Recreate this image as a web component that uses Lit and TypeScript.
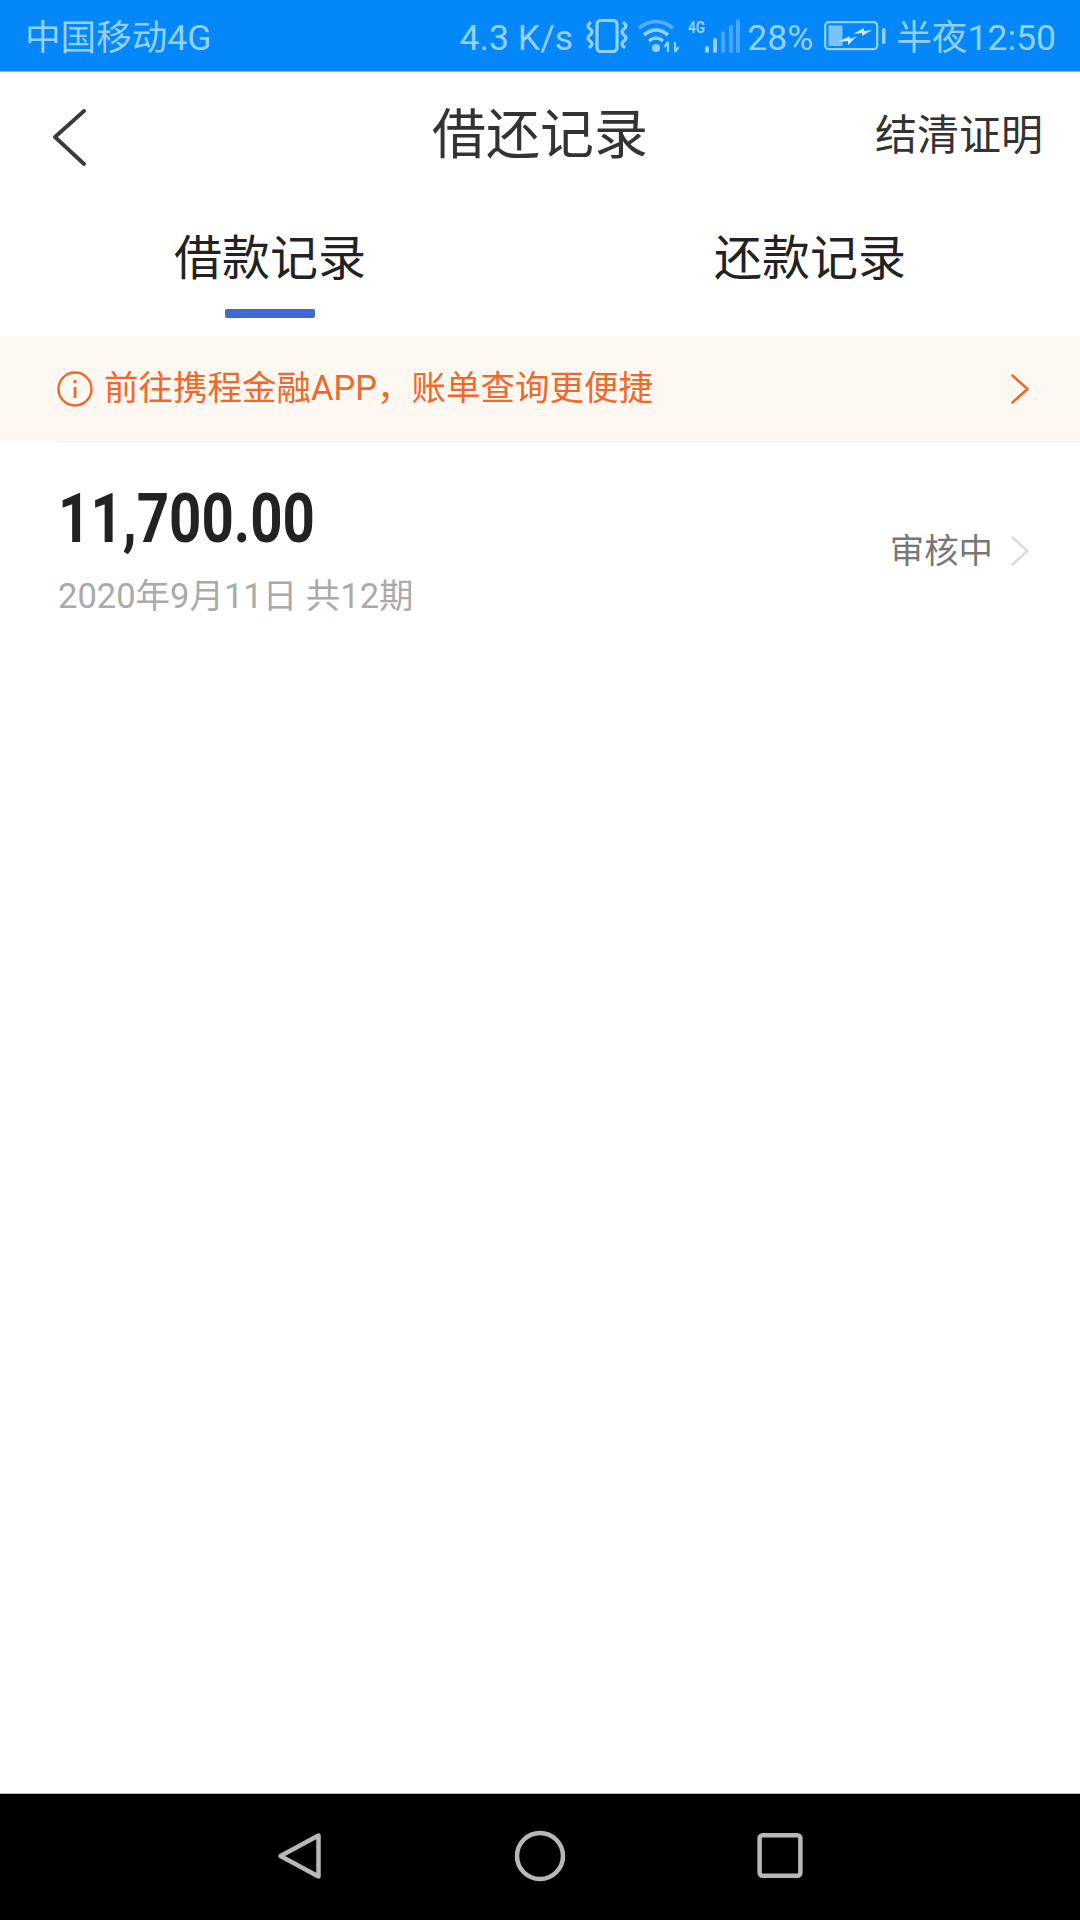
import { LitElement, html, css } from "lit";
import { customElement } from "lit/decorators.js";

const chevron = (cls: string) => html`<svg class=${cls} viewBox="0 0 18 30" fill="none" stroke="currentColor" stroke-width="2.6" stroke-linecap="round" stroke-linejoin="round"><path d="M1.5 1.5 L16.5 15 L1.5 28.5"/></svg>`;

@customElement("app-root")
export class AppRoot extends LitElement {
  static styles = css`
    :host { display: block; width: 1080px; height: 1920px; background: #fff; font-family: Roboto, "Noto Sans CJK SC", sans-serif; overflow: hidden; }
    .page { display: flex; flex-direction: column; height: 1920px; }
    .status { height: 72px; flex: none; box-sizing: border-box; background: #0487f9; border-bottom: 1px solid #6dbcfb; display: flex; align-items: center; justify-content: space-between; padding: 0 24px 0 25px; color: #93d0fe; font-size: 35.6px; line-height: 64px; }
    .status-right { display: flex; align-items: center; }
    .status svg { display: block; flex: none; }
    .t { margin-top: 4px; white-space: nowrap; }
    .speed { margin-right: 13px; }
    .vib { width: 42px; height: 34px; margin-right: 10px; }
    .wifi { width: 42px; height: 34px; margin-right: 8px; }
    .sig { width: 52px; height: 34px; margin-right: 7px; }
    .pct { margin-right: 11px; }
    .bat { width: 62px; height: 30px; margin-right: 10px; }

    .nav { height: 122px; flex: none; display: grid; grid-template-columns: 1fr auto 1fr; align-items: center; color: #333; }
    .back { width: 34px; height: 58px; margin-left: 52px; margin-top: 10px; color: #3a3a3a; display: block; }
    .title { font-size: 54px; line-height: 70px; margin-top: 5px; }
    .link { justify-self: end; font-size: 42px; line-height: 56px; margin-right: 37px; margin-top: 6px; }

    .tabs { height: 142px; flex: none; display: grid; grid-template-columns: 1fr 1fr; color: #222; }
    .tab { display: flex; flex-direction: column; align-items: center; font-size: 48px; line-height: 64px; padding-top: 33px; }
    .bar { width: 90px; height: 9px; border-radius: 2px; background: #4169d4; margin-top: 18px; }

    .banner { height: 105px; flex: none; display: flex; align-items: center; background: #fef8f2; color: #f0682b; font-size: 34.5px; padding: 0 51px 0 57px; }
    .info { width: 36px; height: 36px; flex: none; margin-right: 11px; display: block; }
    .banner-text { flex: 1; margin-bottom: 7px; }
    .chev { width: 18px; height: 30px; flex: none; display: block; }

    .list { flex: 1; margin-left: 57px; border-top: 1px solid #eeeeee; }
    .row { display: flex; justify-content: space-between; align-items: flex-start; padding: 37px 51px 0 1px; }
    .amount { font-size: 68px; line-height: 80px; font-weight: 700; color: #222; transform: scaleX(0.83); transform-origin: left center; white-space: nowrap; }
    .date { font-size: 34.5px; line-height: 48px; margin-top: 13px; color: #aaaaaa; }
    .state { display: flex; align-items: center; font-size: 34.4px; line-height: 48px; color: #777; margin-top: 48px; }
    .state .chev { color: #dcdcdc; margin-left: 18px; }

    .sysnav { height: 127px; flex: none; box-sizing: border-box; background: #000; border-top: 1px solid #bbb; display: flex; align-items: center; justify-content: center; }
    .sysnav svg { display: block; width: 540px; height: 60px; }
  `;

  render() {
    return html`<div class="page">
      <div class="status">
        <span class="t">中国移动4G</span>
        <div class="status-right">
          <span class="t speed">4.3 K/s</span>
          <svg class="vib" viewBox="0 0 42 34" fill="none" stroke="#93d0fe" stroke-width="3.2" stroke-linecap="round"><rect x="11" y="1.5" width="20" height="31" rx="3.5"/><path d="M4 4 q-4 3 0 6 q4 3 0 6 q-4 3 0 6 q4 3 0 6 M38 4 q4 3 0 6 q-4 3 0 6 q4 3 0 6 q-4 3 0 6"/></svg>
          <svg class="wifi" viewBox="0 0 42 34" fill="none" stroke-linecap="butt"><path d="M1 9 Q18 -4 35 9" stroke="#56adfb" stroke-width="3.6"/><path d="M6 16 Q18 6 30 16" stroke="#93d0fe" stroke-width="3.6"/><path d="M11 22 Q18 16 25 22" stroke="#93d0fe" stroke-width="3.6"/><circle cx="18" cy="29" r="4" fill="#93d0fe"/><path d="M30 23 v10 M26.5 28 l3.5 -5 M37 23 v10 M37 33 l3.5 -5" stroke="#93d0fe" stroke-width="2.2"/></svg>
          <svg class="sig" viewBox="0 0 52 34"><text x="0" y="14" font-size="16" font-weight="700" fill="#93d0fe" font-family="Roboto, sans-serif" textLength="17" lengthAdjust="spacingAndGlyphs">4G</text>
            <rect x="17" y="27" width="4" height="7" rx="2" fill="#93d0fe"/>
            <rect x="25" y="19" width="4" height="15" rx="2" fill="#93d0fe"/>
            <rect x="33" y="12" width="4" height="22" rx="2" fill="#4aa6fa"/>
            <rect x="41" y="6" width="4" height="28" rx="2" fill="#4aa6fa"/>
            <rect x="48" y="0" width="4" height="34" rx="2" fill="#4aa6fa"/>
          </svg>
          <span class="t pct">28%</span>
          <svg class="bat" viewBox="0 0 62 30" fill="none"><rect x="1.2" y="1.2" width="52" height="27" rx="3.5" stroke="#93d0fe" stroke-width="2.2"/><rect x="4.5" y="4.5" width="14" height="20.5" fill="#7cc3fd"/><rect x="58" y="7" width="3.5" height="16" rx="1.5" fill="#93d0fe"/><path d="M14 21 L26 15 V18 L33 15 L24 24 V20 Z M29 13 L40 7 V10 L48 9 L38 15 V12 Z" fill="#d0eaff"/></svg>
          <span class="t">半夜12:50</span>
        </div>
      </div>

      <div class="nav">
        <svg class="back" viewBox="0 0 34 58" fill="none" stroke="currentColor" stroke-width="3.8" stroke-linecap="round" stroke-linejoin="round"><path d="M32 2 L3 28 L32 55"/></svg>
        <div class="title">借还记录</div>
        <div class="link">结清证明</div>
      </div>

      <div class="tabs">
        <div class="tab">借款记录<div class="bar"></div></div>
        <div class="tab">还款记录</div>
      </div>

      <div class="banner">
        <svg class="info" viewBox="0 0 36 36" fill="none" stroke="currentColor"><circle cx="18" cy="18" r="16.5" stroke-width="2.4"/><path d="M18 16 V27" stroke-width="2.8"/><circle cx="18" cy="10.5" r="1.8" fill="currentColor" stroke="none"/></svg>
        <div class="banner-text">前往携程金融APP，账单查询更便捷</div>
        ${chevron("chev")}
      </div>

      <div class="list">
        <div class="row">
          <div>
            <div class="amount">11,700.00</div>
            <div class="date">2020年9月11日 共12期</div>
          </div>
          <div class="state">审核中${chevron("chev")}</div>
        </div>
      </div>

      <div class="sysnav">
        <svg viewBox="0 0 540 60" fill="none" stroke="#b8b8b8" stroke-width="4.5" stroke-linejoin="round">
          <path d="M10.5 29 L48.5 8.5 V49.5 Z"/>
          <circle cx="270" cy="29" r="23"/>
          <rect x="489.6" y="8.2" width="40.8" height="40.6" rx="3"/>
        </svg>
      </div>
    </div>`;
  }
}
